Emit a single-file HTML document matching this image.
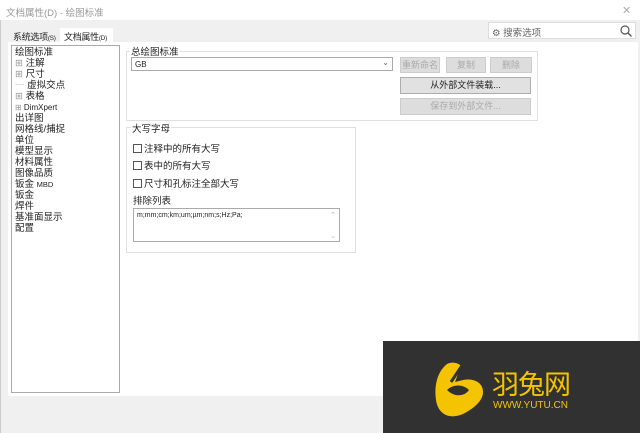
<!DOCTYPE html>
<html><head><meta charset="utf-8"><style>
*{margin:0;padding:0;box-sizing:border-box}
body{width:640px;height:433px;overflow:hidden;background:#f0f0f0;font-family:"Liberation Sans","Noto Sans CJK SC",sans-serif;font-size:9.5px;color:#222;position:relative}
.a{position:absolute}
.title{left:0;top:0;width:640px;height:20px;background:#fff;color:#999;font-size:9.5px;padding:5px 0 0 6px}
.btn{position:absolute;background:#ddd;border:1px solid #ccc;color:#aaa;text-align:center;font-size:9px;line-height:14px}
.tree div{height:11px;line-height:11px;white-space:nowrap}
.cb{display:inline-block;width:9px;height:9px;border:1px solid #555;vertical-align:-1px;margin-right:2px}
</style></head><body>
<div class="a title">文档属性(D) - 绘图标准</div>
<div class="a" style="left:622px;top:4px;color:#aaa;font-size:11px">✕</div>
<div class="a" style="left:0;top:20px;width:1px;height:413px;background:#ccc"></div>
<div class="a" style="left:13px;top:30px;font-size:9px;letter-spacing:-0.3px;white-space:nowrap">系统选项<span style="font-size:6.5px">(S)</span></div>
<div class="a" style="left:60px;top:28px;width:53px;height:15px;background:#fff;padding:2px 0 0 4px;font-size:9px;letter-spacing:-0.3px;white-space:nowrap">文档属性<span style="font-size:6.5px">(D)</span></div>
<div class="a" style="left:488px;top:22px;width:148px;height:17px;background:#fff;border:1px solid #ddd;color:#666;padding:2px 0 0 3px">⚙ 搜索选项
<svg style="position:absolute;right:3px;top:2px" width="12" height="12" viewBox="0 0 12 12"><circle cx="5" cy="5" r="4" fill="none" stroke="#555" stroke-width="1.2"/><path d="M8 8 L11.5 11.5" stroke="#555" stroke-width="1.3"/></svg></div>
<div class="a" style="left:8px;top:42px;width:630px;height:354px;background:#fff"></div>
<div class="a tree" style="left:11px;top:45px;width:109px;height:348px;border:1px solid #aaa;padding:1px 0 0 3px;background:#fff">
<div>绘图标准</div><div><span style="color:#999">⊞</span> 注解</div><div><span style="color:#999">⊞</span> 尺寸</div><div><span style="color:#999">┄</span> 虚拟交点</div><div><span style="color:#999">⊞</span> 表格</div><div style="font-size:8px"><span style="color:#999">⊞</span> DimXpert</div><div>出详图</div><div>网格线/捕捉</div><div>单位</div><div>模型显示</div><div>材料属性</div><div>图像品质</div><div>钣金 <span style="font-size:7.5px">MBD</span></div><div>钣金</div><div>焊件</div><div>基准面显示</div><div>配置</div>
</div>
<div class="a" style="left:126px;top:51px;width:412px;height:70px;border:1px solid #e0e0e0"></div>
<div class="a" style="left:130px;top:44px;background:#fff;padding:0 1px">总绘图标准</div>
<div class="a" style="left:131px;top:57px;width:262px;height:14px;border:1px solid #aaa;font-size:8px;padding:2px 0 0 3px">GB<span style="position:absolute;right:3px;top:0;color:#666">⌄</span></div>
<div class="btn" style="left:400px;top:57px;width:40px;height:16px">重新命名</div>
<div class="btn" style="left:446px;top:57px;width:40px;height:16px">复制</div>
<div class="btn" style="left:490px;top:57px;width:42px;height:16px">删除</div>
<div class="btn" style="left:400px;top:77px;width:131px;height:17px;color:#222;background:#e1e1e1;border-color:#adadad">从外部文件装载...</div>
<div class="btn" style="left:400px;top:98px;width:131px;height:17px">保存到外部文件...</div>
<div class="a" style="left:126px;top:127px;width:230px;height:126px;border:1px solid #e0e0e0"></div>
<div class="a" style="left:131px;top:121px;background:#fff;padding:0 1px">大写字母</div>
<div class="a" style="left:133px;top:141px"><span class="cb"></span>注释中的所有大写</div>
<div class="a" style="left:133px;top:158px"><span class="cb"></span>表中的所有大写</div>
<div class="a" style="left:133px;top:176px"><span class="cb"></span>尺寸和孔标注全部大写</div>
<div class="a" style="left:133px;top:193px">排除列表</div>
<div class="a" style="left:133px;top:208px;width:207px;height:34px;border:1px solid #aaa;font-size:7px;padding:3px 0 0 3px">m;mm;cm;km;um;µm;nm;s;Hz;Pa;<span style="position:absolute;right:3px;top:2px;color:#bbb">⌃</span><span style="position:absolute;right:3px;bottom:1px;color:#bbb">⌄</span></div>
<div class="a" style="left:383px;top:341px;width:257px;height:92px;background:#313131"></div>
<svg class="a" style="left:433px;top:360px" width="52" height="60" viewBox="0 0 52 60">
<path d="M14 4 C4 12 1 26 3 40 C5 54 16 60 30 54 C42 48 50 40 50 32 C50 22 40 18 30 20 L22 22 L28 6 C24 2 18 2 14 4Z" fill="#f5c400"/>
<path d="M14 30 C20 24 30 24 36 30 C32 36 22 38 14 30Z" fill="#313131"/>
<path d="M18 22 L30 4" stroke="#313131" stroke-width="3"/>
</svg>
<div class="a" style="left:492px;top:363px;color:#f5c400;font-size:27px;letter-spacing:-1px">羽兔网</div>
<div class="a" style="left:493px;top:400px;color:#f5c400;font-size:10px">WWW.YUTU.CN</div>
</body></html>
